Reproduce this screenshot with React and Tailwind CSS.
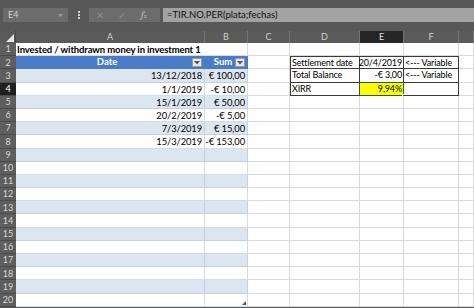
import React from "react";

const COLS = [
  { key: "A", w: 189 },
  { key: "B", w: 43 },
  { key: "C", w: 42 },
  { key: "D", w: 70 },
  { key: "E", w: 44 },
  { key: "F", w: 55 },
  { key: "G", w: 40 },
];

const DATA = {
  3: ["13/12/2018", "€ 100,00"],
  4: ["1/1/2019", "-€ 10,00"],
  5: ["15/1/2019", "€ 50,00"],
  6: ["20/2/2019", "-€ 5,00"],
  7: ["7/3/2019", "€ 15,00"],
  8: ["15/3/2019", "-€ 153,00"],
};

const SIDE = {
  2: ["Settlement date", "20/4/2019", "<--- Variable"],
  3: ["Total Balance", "-€ 3,00", "<--- Variable"],
  4: ["XIRR", "9,94%", ""],
};

function FilterBtn() {
  return (
    <div className="absolute right-[2px] top-[2px] w-[10px] h-[9px] bg-[#e8e8e8] border border-[#9a9a9a] flex items-center justify-center">
      <svg width="6" height="4" viewBox="0 0 6 4">
        <path d="M0 0 L6 0 L3 3.5 Z" fill="#555" />
      </svg>
    </div>
  );
}

function Row({ n }) {
  const band = n >= 3 && n <= 20 && n % 2 === 1;
  const tableBg = band ? "bg-[#dce6f1]" : "bg-white";
  const selected = n === 4;
  return (
    <div className="flex h-[13.2px]">
      <div
        className={`w-[16px] shrink-0 flex items-center justify-center text-[9px] border-b border-[#4a4a4a] ${
          selected ? "bg-[#1f1f1f] text-white" : "bg-[#5e5e5e] text-[#d6d6d6]"
        }`}
      >
        {n}
      </div>
      {COLS.map((c) => {
        let content = null;
        let cls = "bg-white border-r border-b border-[#dadada]";
        if (c.key === "A" || c.key === "B") {
          if (n === 1) {
            if (c.key === "A") {
              content = (
                <span className="absolute left-[1px] top-0 whitespace-nowrap font-bold text-[9.5px] tracking-[-0.12px] leading-[13px] text-black">
                  Invested / withdrawn money in investment 1
                </span>
              );
              cls = "bg-white border-b border-[#dadada] z-10";
            }
          } else if (n === 2) {
            cls = "bg-[#4a7bc8] border-r border-b border-[#4a7bc8]";
            content = (
              <>
                <span className="absolute inset-0 flex items-center justify-center pr-[6px] text-white font-bold text-[9.5px]">
                  {c.key === "A" ? "Date" : "Sum"}
                </span>
                <FilterBtn />
              </>
            );
          } else {
            cls = `${tableBg} border-r border-b ${band ? "border-[#c5d0dc]" : "border-[#d6dce4]"}`;
            if (DATA[n]) {
              content = (
                <span className="absolute right-[2px] top-0 text-[9.4px] tracking-[-0.1px] leading-[13px] text-black whitespace-nowrap">
                  {DATA[n][c.key === "A" ? 0 : 1]}
                </span>
              );
            }
          }
        }
        if (SIDE[n] && (c.key === "D" || c.key === "E" || c.key === "F")) {
          const idx = { D: 0, E: 1, F: 2 }[c.key];
          const txt = SIDE[n][idx];
          const yellow = n === 4 && c.key === "E";
          cls = `${yellow ? "bg-[#ffff00]" : "bg-white"} border-r border-b border-[#3a3a3a] ${
            c.key === "D" ? "border-l" : ""
          } ${n === 2 ? "border-t" : ""}`;
          content = (
            <span
              className={`absolute top-0 text-[9px] tracking-[-0.15px] leading-[12px] text-black whitespace-nowrap ${
                c.key === "E" ? "right-[1px]" : "left-[1px]"
              }`}
            >
              {txt}
            </span>
          );
        }
        const isG = c.key === "G";
        return (
          <div
            key={c.key}
            className={`relative box-border ${isG ? "flex-1" : "shrink-0"} ${cls}`}
            style={isG ? undefined : { width: c.w }}
          >
            {content}
            {n === 4 && c.key === "E" && (
              <>
                <div className="absolute inset-[-1px] border border-[#1d5e35] pointer-events-none" />
                <div className="absolute right-[-3px] bottom-[-3px] w-[4px] h-[4px] bg-[#1d5e35] border border-white" />
              </>
            )}
            {n === 20 && c.key === "B" && (
              <svg className="absolute right-[1px] bottom-[1px]" width="4" height="4" viewBox="0 0 4 4">
                <path d="M4 0 L4 4 L0 4 Z" fill="#555" />
              </svg>
            )}
          </div>
        );
      })}
    </div>
  );
}

export default function App() {
  const rows = Array.from({ length: 20 }, (_, i) => i + 1);
  return (
    <div
      className="w-[474px] h-[308px] overflow-hidden bg-[#585858] select-none"
      style={{ fontFamily: "Lato, 'Liberation Sans', sans-serif" }}
    >
      {/* Formula bar */}
      <div className="h-[31px] flex items-start pt-[8px] pl-[3px] gap-0">
        <div className="w-[65px] h-[14px] bg-[#6c6c6c] flex items-center justify-between px-[5px] text-[9px] text-[#d0d0d0]">
          <span>E4</span>
          <svg width="5" height="3" viewBox="0 0 5 3">
            <path d="M0 0 L5 0 L2.5 3 Z" fill="#9a9a9a" />
          </svg>
        </div>
        <div className="w-[21px] h-[14px] flex flex-col items-center justify-center gap-[1px]">
          <div className="w-[2px] h-[2px] bg-[#cfcfcf]" />
          <div className="w-[2px] h-[2px] bg-[#cfcfcf]" />
          <div className="w-[2px] h-[2px] bg-[#cfcfcf]" />
        </div>
        <div className="w-[71px] h-[14px] bg-[#6c6c6c] flex items-center text-[10px] text-[#8e8e8e]">
          <span className="w-[22px] text-center">✕</span>
          <span className="w-[22px] text-center">✓</span>
          <span className="w-[22px] text-center italic font-serif text-[#b8b8b8]">
            f<span className="text-[7px]">x</span>
          </span>
        </div>
        <div className="ml-[3px] flex-1 h-[14px] bg-[#a2a2a2] flex items-center pl-[4px] text-[9.5px] text-[#111]">
          =TIR.NO.PER(plata;fechas)
        </div>
      </div>
      {/* Column headers */}
      <div className="flex h-[12px]">
        <div className="w-[16px] shrink-0 bg-[#5a5a5a] relative border-r border-[#4a4a4a]">
          <svg className="absolute right-[1px] bottom-[1px]" width="8" height="8" viewBox="0 0 8 8">
            <path d="M8 0 L8 8 L0 8 Z" fill="#e6e6e6" />
          </svg>
        </div>
        {COLS.map((c) => {
          const sel = c.key === "E";
          const isG = c.key === "G";
          return (
            <div
              key={c.key}
              className={`box-border ${isG ? "flex-1" : "shrink-0"} flex items-center justify-center text-[9px] border-r border-[#757575] ${
                sel ? "bg-[#262626] text-[#e0e0e0]" : "bg-[#5a5a5a] text-[#d0d0d0]"
              }`}
              style={isG ? undefined : { width: c.w }}
            >
              {isG ? "" : c.key}
            </div>
          );
        })}
      </div>
      {rows.map((n) => (
        <Row key={n} n={n} />
      ))}
    </div>
  );
}
